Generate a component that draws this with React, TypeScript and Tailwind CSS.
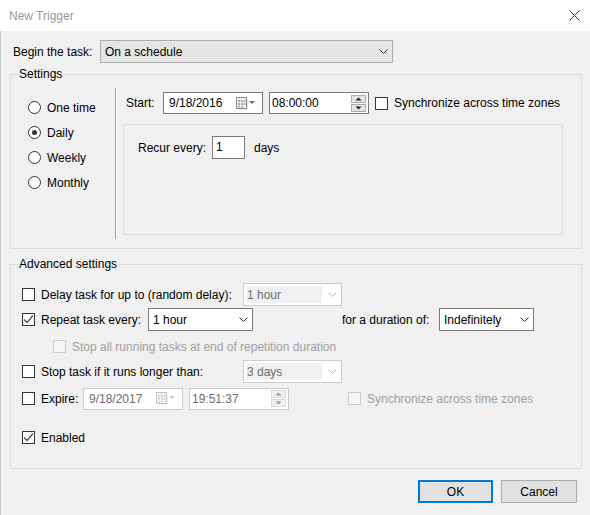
import React from 'react'

const Check = () => (
  <svg width="11" height="11" viewBox="0 0 11 11" className="block">
    <polyline points="1,5.5 4,8.5 10,1.5" fill="none" stroke="#4d4d4d" strokeWidth="1.2" />
  </svg>
)

function Checkbox({ checked = false, disabled = false }: { checked?: boolean; disabled?: boolean }) {
  return (
    <span
      className={`w-[13px] h-[13px] shrink-0 border flex items-center justify-center ${
        disabled ? 'border-[#cccccc] bg-[#f5f5f5]' : 'border-[#333333] bg-white'
      }`}
    >
      {checked && <Check />}
    </span>
  )
}

function Radio({ label, selected = false }: { label: string; selected?: boolean }) {
  return (
    <div className="h-[25px] flex items-center gap-[6px]">
      <span className="w-[13px] h-[13px] rounded-full border border-[#333333] bg-white flex items-center justify-center">
        {selected && <span className="w-[5px] h-[5px] rounded-full bg-[#333333]" />}
      </span>
      <span>{label}</span>
    </div>
  )
}

const Chevron = ({ color = '#333333' }: { color?: string }) => (
  <svg width="9" height="5" viewBox="0 0 9 5" className="block shrink-0">
    <polyline points="0.5,0.5 4.5,4.5 8.5,0.5" fill="none" stroke={color} strokeWidth="1" />
  </svg>
)

function Combo({ value, width, variant = 'white' }: { value: string; width: string; variant?: 'white' | 'readonly' }) {
  const tone = variant === 'readonly' ? 'bg-[#e5e5e5] border-[#adadad]' : 'bg-white border-[#7a7a7a]'
  return (
    <div className={`${width} h-[23px] shrink-0 border ${tone} flex items-center pl-[4px] pr-[4px]`}>
      <span className="flex-1 leading-none">{value}</span>
      <Chevron />
    </div>
  )
}

function DisabledCombo({ value }: { value: string }) {
  return (
    <div className="w-[99px] h-[23px] shrink-0 border border-[#cccccc] bg-white flex items-center p-[2px] pr-[4px]">
      <span className="w-[76px] h-full bg-[#f0f0f0] text-[#6d6d6d] flex items-center pl-[1px]">{value}</span>
      <span className="flex-1" />
      <Chevron color="#bfbfbf" />
    </div>
  )
}

const CalendarIcon = ({ disabled = false }: { disabled?: boolean }) => (
  <svg width="20" height="13" viewBox="0 0 20 13" className="block shrink-0">
    <rect x="1.5" y="1.5" width="10" height="11" fill={disabled ? '#e6e6e6' : '#d0d0d0'} />
    <rect x="0.5" y="0.5" width="10" height="11" fill={disabled ? '#f4f4f4' : '#f0f0f0'} stroke={disabled ? '#c4c4c4' : '#8c8c8c'} />
    <g fill={disabled ? '#d4d4d4' : '#a8a8a8'}>
      <rect x="2" y="3" width="2" height="2" />
      <rect x="5" y="3" width="2" height="2" />
      <rect x="8" y="3" width="1.5" height="2" />
      <rect x="2" y="6" width="2" height="2" />
      <rect x="5" y="6" width="2" height="2" />
      <rect x="8" y="6" width="1.5" height="2" />
      <rect x="2" y="9" width="2" height="1.5" />
      <rect x="5" y="9" width="2" height="1.5" />
    </g>
    <polygon points="13,4 19,4 16,7" fill={disabled ? '#c8ccd4' : '#5b6f8e'} />
  </svg>
)

function DateBox({ value, disabled = false }: { value: string; disabled?: boolean }) {
  return (
    <div
      className={`w-[100px] h-[22px] shrink-0 border flex items-center pl-[5px] pr-[6px] ${
        disabled ? 'border-[#cccccc] bg-white text-[#6d6d6d]' : 'border-[#7a7a7a] bg-white'
      }`}
    >
      <span className="flex-1">{value}</span>
      <CalendarIcon disabled={disabled} />
    </div>
  )
}

const Tri = ({ up, color }: { up: boolean; color: string }) => (
  <svg width="7" height="4" viewBox="0 0 7 4" className="block">
    <polygon points={up ? '0.5,3.5 6.5,3.5 3.5,0.5' : '0.5,0.5 6.5,0.5 3.5,3.5'} fill={color} />
  </svg>
)

function TimeBox({ value, disabled = false }: { value: string; disabled?: boolean }) {
  const btn = disabled ? 'bg-[#f0f0f0] border-[#dadada]' : 'bg-[#e5e5e5] border-[#adadad]'
  const tri = disabled ? '#9a9a9a' : '#222222'
  return (
    <div
      className={`w-[100px] h-[22px] shrink-0 border flex items-center pl-[2px] pr-[2px] ${
        disabled ? 'border-[#cccccc] bg-white text-[#6d6d6d]' : 'border-[#7a7a7a] bg-white'
      }`}
    >
      <span className="flex-1">{value}</span>
      <div className="flex flex-col gap-[1px]">
        <span className={`w-[15px] h-[8px] border ${btn} flex items-center justify-center`}>
          <Tri up color={tri} />
        </span>
        <span className={`w-[15px] h-[8px] border ${btn} flex items-center justify-center`}>
          <Tri up={false} color={tri} />
        </span>
      </div>
    </div>
  )
}

function Group({ title, className, children }: { title: string; className: string; children: React.ReactNode }) {
  return (
    <div className={`relative mx-[10px] w-[572px] border border-[#dcdcdc] ${className}`}>
      <span className="absolute left-[7px] top-[-9px] px-[1px] bg-[#f0f0f0] leading-[16px]">{title}</span>
      {children}
    </div>
  )
}

export default function App() {
  return (
    <div className="w-[590px] h-[515px] overflow-hidden bg-[#f0f0f0] text-black text-[12px] font-['Liberation_Sans',Arial,sans-serif] shadow-[inset_1px_0_0_#c4c4c4]">
      {/* title bar */}
      <div className="h-[31px] bg-white flex items-center justify-between pl-[9px] pr-[10px]">
        <span className="text-[#999999]">New Trigger</span>
        <svg width="11" height="11" viewBox="0 0 11 11" className="block">
          <path d="M0.5 0.5 L10.5 10.5 M10.5 0.5 L0.5 10.5" stroke="#333333" strokeWidth="1" />
        </svg>
      </div>

      <div className="mt-[9px] h-[23px] flex items-center pl-[13px]">
        <span className="w-[87px]">Begin the task:</span>
        <Combo value="On a schedule" width="w-[293px]" variant="readonly" />
      </div>

      <Group title="Settings" className="mt-[11px] h-[175px] flex">
        <div className="w-[104px] pl-[17px] pt-[20px]">
          <Radio label="One time" />
          <Radio label="Daily" selected />
          <Radio label="Weekly" />
          <Radio label="Monthly" />
        </div>
        <div className="mt-[13px] h-[151px] w-[2px] border-l border-[#a0a0a0] border-r border-r-white" />
        <div className="pl-[6px] pt-[17px]">
          <div className="h-[22px] flex items-center pl-[3px]">
            <span className="w-[37px]">Start:</span>
            <DateBox value="9/18/2016" />
            <span className="w-[6px]" />
            <TimeBox value="08:00:00" />
            <span className="w-[6px]" />
            <Checkbox />
            <span className="ml-[6px]">Synchronize across time zones</span>
          </div>
          <div className="mt-[10px] w-[440px] h-[111px] border border-[#dcdcdc] pt-[11px] pl-[14px]">
            <div className="h-[23px] flex items-center">
              <span className="w-[74px]">Recur every:</span>
              <div className="w-[33px] h-[23px] border border-[#7a7a7a] bg-white pl-[3px] pt-[2px] leading-[16px]">1</div>
              <span className="ml-[9px]">days</span>
            </div>
          </div>
        </div>
      </Group>

      <Group title="Advanced settings" className="mt-[15px] h-[205px] pt-[18px] pl-[11px]">
        <div className="h-[23px] flex items-center">
          <Checkbox />
          <span className="ml-[6px] w-[202px]">Delay task for up to (random delay):</span>
          <DisabledCombo value="1 hour" />
        </div>
        <div className="mt-[2px] h-[23px] flex items-center">
          <Checkbox checked />
          <span className="ml-[6px] w-[107px]">Repeat task every:</span>
          <Combo value="1 hour" width="w-[105px]" />
          <span className="ml-[89px] w-[97px]">for a duration of:</span>
          <Combo value="Indefinitely" width="w-[95px]" />
        </div>
        <div className="mt-[4px] h-[23px] flex items-center pl-[31px]">
          <Checkbox disabled />
          <span className="ml-[6px] text-[#a0a0a0]">Stop all running tasks at end of repetition duration</span>
        </div>
        <div className="mt-[2px] h-[23px] flex items-center">
          <Checkbox />
          <span className="ml-[6px] w-[202px]">Stop task if it runs longer than:</span>
          <DisabledCombo value="3 days" />
        </div>
        <div className="mt-[4px] h-[23px] flex items-center">
          <Checkbox />
          <span className="ml-[6px] w-[42px]">Expire:</span>
          <DateBox value="9/18/2017" disabled />
          <span className="w-[6px]" />
          <TimeBox value="19:51:37" disabled />
          <span className="w-[59px]" />
          <Checkbox disabled />
          <span className="ml-[6px] text-[#a0a0a0]">Synchronize across time zones</span>
        </div>
        <div className="mt-[16px] h-[23px] flex items-center">
          <Checkbox checked />
          <span className="ml-[6px]">Enabled</span>
        </div>
      </Group>

      <div className="mt-[11px] flex justify-end gap-[8px] pr-[13px]">
        <button className="w-[75px] h-[23px] border-2 border-[#0078d7] bg-[#e1e1e1]">OK</button>
        <button className="w-[76px] h-[23px] border border-[#adadad] bg-[#e1e1e1]">Cancel</button>
      </div>
    </div>
  )
}
